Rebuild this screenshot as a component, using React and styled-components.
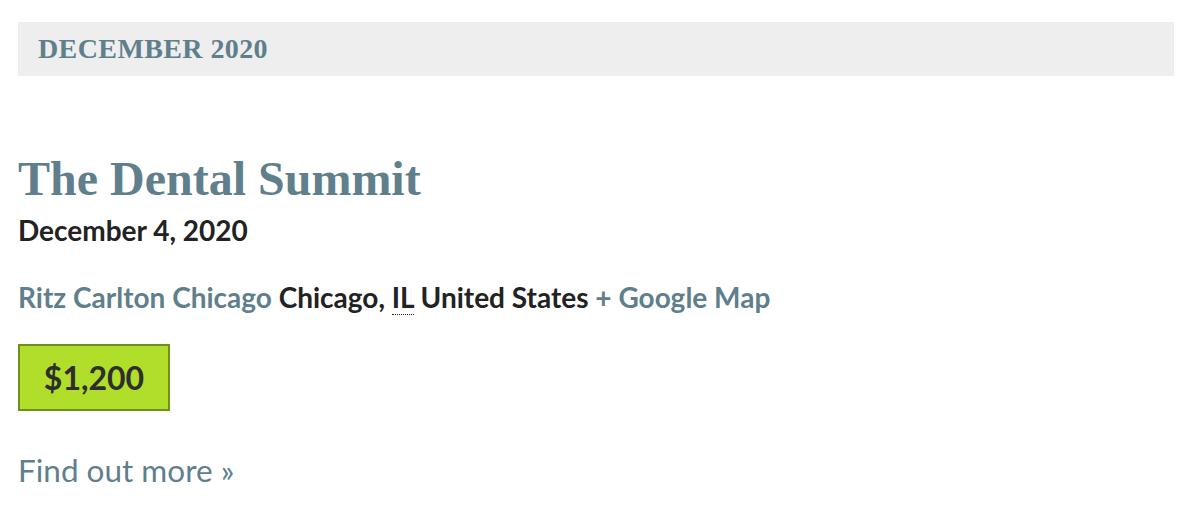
import React from "react";
import styled, { createGlobalStyle } from "styled-components";

const GlobalStyle = createGlobalStyle`
  body {
    margin: 0;
    background: #fff;
    font-family: Lato, "Noto Sans", sans-serif;
  }
`;

function App() {
  return (
    <Page>
      <GlobalStyle />
      <MonthBar>
        <MonthTitle>December 2020</MonthTitle>
      </MonthBar>
      <Event>
        <EventTitle>The Dental Summit</EventTitle>
        <EventDate>December 4, 2020</EventDate>
        <Venue>
          <VenueLink href="#">Ritz Carlton Chicago</VenueLink> Chicago,{" "}
          <Abbr title="Illinois">IL</Abbr> United States{" "}
          <VenueLink href="#">+ Google Map</VenueLink>
        </Venue>
        <Price>$1,200</Price>
        <MoreLink href="#">Find out more »</MoreLink>
      </Event>
    </Page>
  );
}

export default App;

const Page = styled.div`
  padding: 22px 26px 0 18px;
`;

const MonthBar = styled.div`
  background-color: #eeeeee;
  height: 54px;
  padding-left: 20px;
  display: flex;
  align-items: center;
`;

const MonthTitle = styled.h2`
  margin: 0;
  font-family: "Liberation Serif", serif;
  font-size: 28px;
  font-weight: 700;
  line-height: 32px;
  letter-spacing: 0.4px;
  text-transform: uppercase;
  color: #5f7f8c;
`;

const Event = styled.div`
  padding-top: 77px;
  display: flex;
  flex-direction: column;
  align-items: flex-start;
`;

const EventTitle = styled.h1`
  margin: 0;
  font-family: "Liberation Serif", serif;
  font-size: 48px;
  font-weight: 700;
  line-height: 52px;
  color: #5f7f8c;
`;

const EventDate = styled.div`
  margin-top: 8px;
  font-size: 28px;
  font-weight: 700;
  color: #222;
  line-height: 34px;
`;

const Venue = styled.div`
  margin-top: 33px;
  font-size: 28px;
  font-weight: 700;
  color: #222;
  line-height: 34px;
`;

const VenueLink = styled.a`
  color: #5f7f8c;
  text-decoration: none;
`;

const Abbr = styled.abbr`
  text-decoration: none;
  border-bottom: 1px dotted #222;
`;

const Price = styled.div`
  margin-top: 30px;
  width: 152px;
  height: 67px;
  box-sizing: border-box;
  background-color: #b1dd2b;
  border: 2px solid #6e9118;
  display: flex;
  align-items: center;
  justify-content: center;
  font-size: 32px;
  font-weight: 700;
  color: #2e2e2e;
`;

const MoreLink = styled.a`
  margin-top: 40px;
  font-size: 31.5px;
  line-height: 38px;
  color: #5f7f8c;
  text-decoration: none;
`;
